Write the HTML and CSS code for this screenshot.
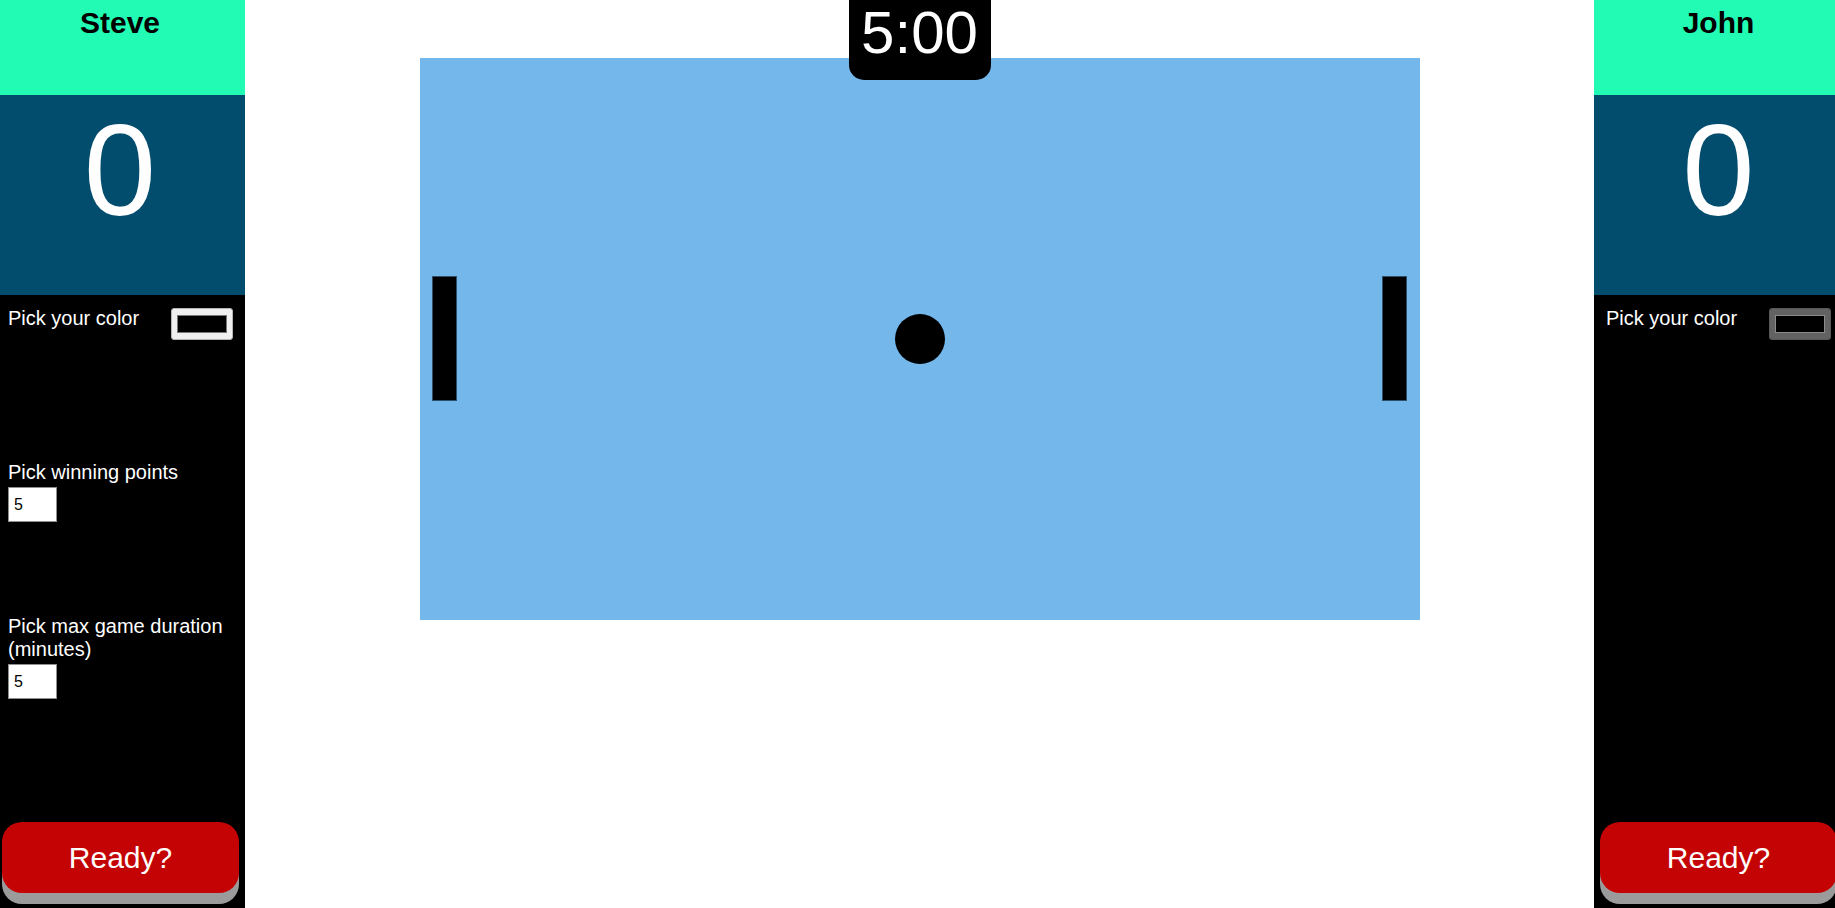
FILE: index.html
```html
<!DOCTYPE html>
<html lang="en">
<head>
  <meta charset="UTF-8">
  <meta name="viewport" content="width=device-width, initial-scale=1.0">
  <title>Pong</title>
  <link rel="stylesheet" href="styles.css">
</head>
<body>

<div id="player1" class="panel">
  <div class="name">Steve</div>
  <div class="score">0</div>
  <div class="settings">
    <div class="color-row">
      <span class="label">Pick your color</span>
      <input type="color" class="picker" value="#000000">
    </div>
    <div class="field points">
      <div class="label">Pick winning points</div>
      <input type="text" class="num" value="5">
    </div>
    <div class="field duration">
      <div class="label">Pick max game duration (minutes)</div>
      <input type="text" class="num" value="5">
    </div>
    <button class="ready">Ready?</button>
  </div>
</div>

<div id="arena">
  <div id="board">
    <div id="timer">5:00</div>
    <div class="paddle left"></div>
    <div class="paddle right"></div>
    <div id="ball"></div>
  </div>
</div>

<div id="player2" class="panel p2">
  <div class="name">John</div>
  <div class="score">0</div>
  <div class="settings">
    <div class="color-row">
      <span class="label">Pick your color</span>
      <input type="color" class="picker off" value="#000000">
    </div>
    <button class="ready">Ready?</button>
  </div>
</div>

</body>
</html>
```

FILE: styles.css
```css
html, body { margin: 0; height: 100%; }
body { font-family: "Liberation Sans", Arial, sans-serif; display: flex; overflow: hidden; background: #fff; }

.panel { flex: 0 0 245px; width: 245px; display: flex; flex-direction: column; background: #000; overflow: hidden; }
.panel > div { box-sizing: border-box; width: 245px; }
.panel .name, .panel .score { padding-right: 5px; }
.panel.p2 { flex-basis: 241px; width: 241px; }
.panel.p2 > div { width: 249px; }
.panel.p2 .name, .panel.p2 .score { padding-left: 4px; padding-right: 4px; }

.name { height: 95px; padding-top: 6px; background: #21fbb3; color: #000; font-size: 30px; font-weight: bold; text-align: center; }
.score { height: 200px; background: #024d6d; color: #fff; font-size: 130px; text-align: center; }

.settings { flex: 1; display: flex; flex-direction: column; padding: 12px 6px 15px 2px; color: #fff; font-size: 20px; }
.panel.p2 .settings { padding-left: 6px; }
.label { display: block; }
.color-row { display: flex; align-items: flex-start; padding-left: 6px; }
.color-row .label { flex: 1; }

.picker { width: 62px; height: 32px; margin: 1px 6px 0 0; padding: 2px 3px; box-sizing: border-box; border: 1px solid #b5b5b5; border-radius: 3px; background: #efefef; cursor: pointer; }
.picker::-webkit-color-swatch-wrapper { padding: 4px 2px; }
.picker::-webkit-color-swatch { border: 1px solid #777; }
.picker.off { background: #626262; border-color: #575757; }
.picker.off::-webkit-color-swatch { border-color: #8a8a8a; }

.field { padding-left: 6px; }
.points { margin-top: 121px; }
.duration { margin-top: 93px; }
.num { display: block; width: 49px; height: 35px; margin-top: 3px; padding: 0 5px; box-sizing: border-box; border: 1px solid #8f8f8f; background: #fff; font-family: "Liberation Sans", Arial, sans-serif; font-size: 16px; color: #000; }

.ready { margin-top: auto; width: 237px; height: 71px; border: none; border-radius: 20px; background: #c40404; box-shadow: 0 11px 0 #9b9b9b; color: #fff; font-family: "Liberation Sans", Arial, sans-serif; font-size: 30px; cursor: pointer; }

#arena { flex: 1; }
#board { position: relative; width: 1000px; height: 562px; margin: 58px auto 0; background: #74b7eb; }
#timer { position: absolute; top: -58px; left: 429px; width: 142px; height: 80px; background: #000; color: #fff; border-radius: 0 0 15px 15px; font-size: 60px; line-height: 66px; text-align: center; box-sizing: border-box; }
.paddle { position: absolute; top: 218px; width: 25px; height: 125px; background: #000; box-sizing: border-box; border: 1px solid #2f4f6a; }
.paddle.left { left: 12px; }
.paddle.right { left: 962px; }
#ball { position: absolute; left: 475px; top: 256px; width: 50px; height: 50px; border-radius: 50%; background: #000; }
```
